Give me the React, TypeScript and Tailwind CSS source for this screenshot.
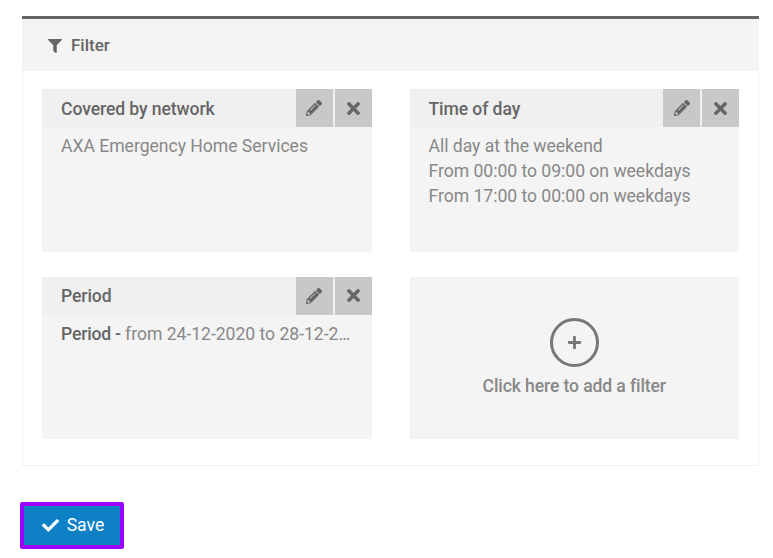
import { FaCheck, FaFilter, FaPencilAlt, FaPlus, FaTimes } from "react-icons/fa";

const FilterCard = ({ title, children }: { title: string; children: React.ReactNode }) => (
  <div className="h-[162.5px] bg-[#f4f4f4]">
    <div className="flex h-[38px] items-center bg-[#f0f0f0]">
      <h3 className="flex-1 pt-[2px] pl-[19px] text-[17.6px] font-medium tracking-[-0.1px] text-[#666]">{title}</h3>
      <button className="flex h-[38px] w-[37px] items-center justify-center bg-[#c8c8c8] text-[#666]">
        <FaPencilAlt className="text-[16px]" />
      </button>
      <button className="ml-[2px] flex h-[38px] w-[37px] items-center justify-center bg-[#c8c8c8] text-[#666]">
        <FaTimes className="text-[19px]" />
      </button>
    </div>
    <div className="px-[19px] pt-[7px] text-[17.6px] leading-[25px] tracking-[-0.03px] text-[#888]">{children}</div>
  </div>
);

const App = () => {
  return (
    <div className="h-[558px] w-[773px] overflow-hidden bg-white pt-4 font-['Roboto',sans-serif]">
      <section className="ml-[22px] w-[737px] border-t-[3px] border-[#666]">
        <div className="flex h-[52px] items-center gap-[9px] bg-[#f4f4f4] pl-[26px] text-[#666]">
          <FaFilter className="mt-[1px] text-[14px]" />
          <span className="mt-[2px] text-[17px] font-medium">Filter</span>
        </div>
        <div className="grid grid-cols-2 gap-x-[38px] gap-y-[25px] border border-t-0 border-[#f2f2f2] pt-[18px] pr-[19px] pb-[26px] pl-[19px]">
          <FilterCard title="Covered by network">AXA Emergency Home Services</FilterCard>
          <FilterCard title="Time of day">
            <p>All day at the weekend</p>
            <p>From 00:00 to 09:00 on weekdays</p>
            <p>From 17:00 to 00:00 on weekdays</p>
          </FilterCard>
          <FilterCard title="Period">
            <p className="truncate">
              <b className="font-medium tracking-[-0.2px] text-[#666]">Period - </b>from 24-12-2020 to 28-12-2020
            </p>
          </FilterCard>
          <button className="flex h-[162.5px] flex-col items-center border border-dashed border-[#f0f0f0] bg-[#f4f4f4] pt-[40px] text-[#777]">
            <span className="flex h-[49px] w-[49px] items-center justify-center rounded-full border-[3px] border-[#777]">
              <FaPlus className="text-[15px]" />
            </span>
            <span className="mt-[6px] text-[17.6px] font-medium tracking-[-0.12px] text-[#888]">Click here to add a filter</span>
          </button>
        </div>
      </section>
      <button className="mt-[36px] ml-[20px] flex h-[47px] w-[104px] items-center justify-center gap-2 rounded-[2px] border-4 border-[#9900ff] bg-[#0e80c6] pl-[2px] text-[17.6px] text-white">
        <FaCheck className="text-[17px]" />
        Save
      </button>
    </div>
  );
};

export default App;
